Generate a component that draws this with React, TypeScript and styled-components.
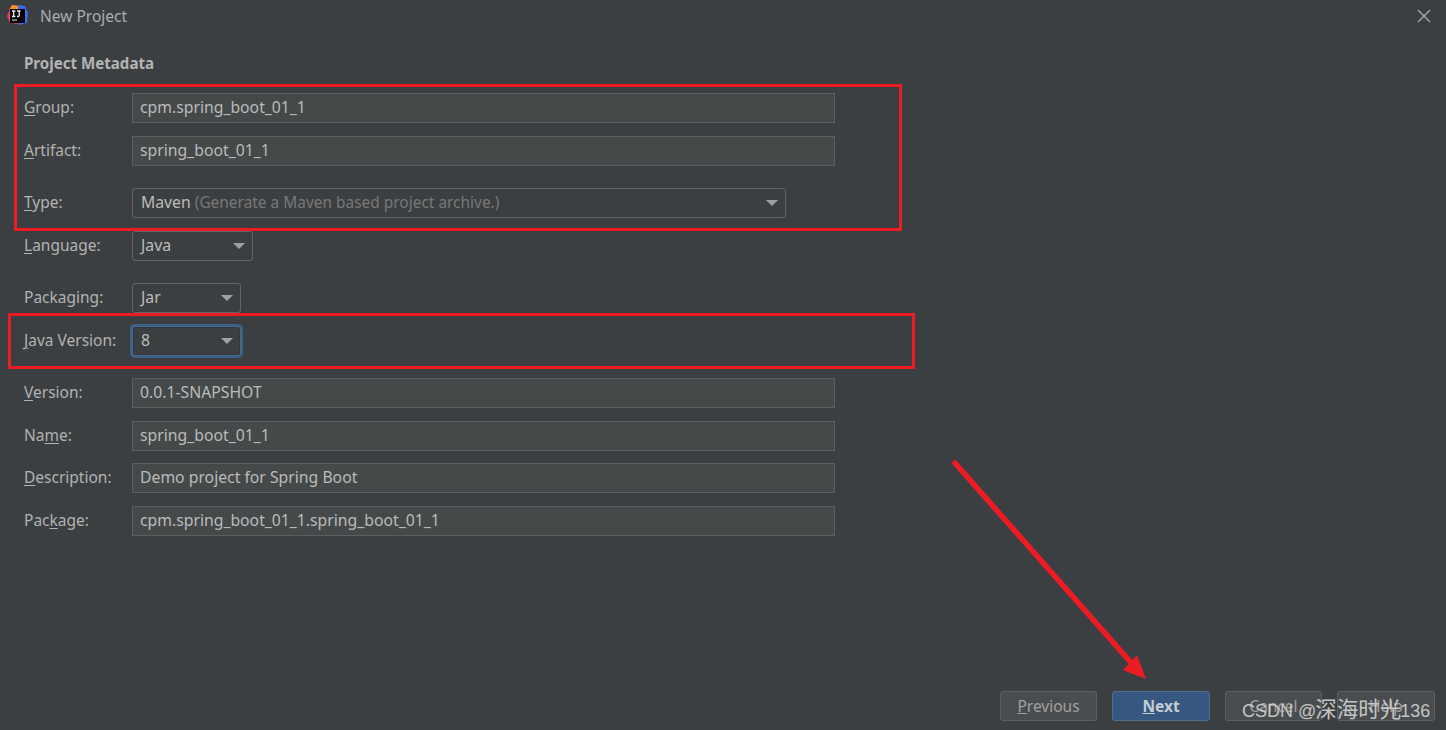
import React from "react";
import styled, { createGlobalStyle } from "styled-components";

const Global = createGlobalStyle`
  html, body { margin: 0; padding: 0; background: #3c3f41; }
  body { font-family: "Noto Sans", "Open Sans", "Liberation Sans", sans-serif; }
`;

const Dialog = styled.div`
  position: relative;
  width: 1446px;
  height: 730px;
  overflow: hidden;
  display: flex;
  flex-direction: column;
  background: #3c3f41;
  color: #bbbbbb;
  font-size: 15.75px;
`;

const TitleBar = styled.div`
  height: 33px;
  flex: none;
  display: flex;
  align-items: center;
  padding: 0 15px 2px 7px;
  gap: 12px;
  box-sizing: border-box;
  color: #a6adb0;
`;

const TitleText = styled.span`
  flex: 1;
  font-size: 15.5px;
`;

const Form = styled.div`
  flex: 1;
  padding: 19px 0 0 24px;
  display: flex;
  flex-direction: column;
`;

const Heading = styled.div`
  font-weight: 700;
  font-size: 15.1px;
  line-height: 22px;
  color: #b4b4b4;
  margin-bottom: 19px;
`;

const Row = styled.div<{ $top: number }>`
  display: flex;
  align-items: center;
  height: 30px;
  margin-top: ${(p) => p.$top}px;
`;

const Label = styled.label`
  width: 108px;
  flex: none;
  color: #b2b2b2;
  font-size: 15.5px;
  padding-bottom: 2px;
  u { text-underline-offset: 2px; }
`;

const Field = styled.div`
  box-sizing: border-box;
  width: 703px;
  height: 30px;
  padding: 0 0 2px 7px;
  display: flex;
  align-items: center;
  background: #45494a;
  border: 1px solid #5c5f60;
  color: #bbbbbb;
  white-space: pre;
`;

const Select = styled.div<{ $w: number; $focus?: boolean }>`
  box-sizing: border-box;
  width: ${(p) => p.$w}px;
  height: 30px;
  padding: 0 7px 0 8px;
  display: flex;
  align-items: center;
  justify-content: space-between;
  background: #3c3f41;
  border: 1px solid ${(p) => (p.$focus ? "#44698f" : "#646464")};
  border-radius: 3px;
  color: #bbbbbb;
  box-shadow: ${(p) => (p.$focus ? "0 0 0 2px #3d6185, inset 0 0 0 1px #33383c" : "none")};
`;

const Hint = styled.span`
  color: #787878;
  margin-left: 4px;
  font-size: 15.45px;
`;

const SelectText = styled.span`
  white-space: pre;
  padding-bottom: 2px;
`;

const Caret = styled.span`
  width: 0;
  height: 0;
  border-left: 6px solid transparent;
  border-right: 6px solid transparent;
  border-top: 6px solid #a0a0a0;
`;

const Footer = styled.div`
  flex: none;
  display: flex;
  justify-content: flex-end;
  gap: 15px;
  padding: 0 11.25px 9px 0;
`;

const Button = styled.div<{ $primary?: boolean }>`
  box-sizing: border-box;
  width: 97.5px;
  height: 30px;
  display: flex;
  align-items: center;
  justify-content: center;
  border-radius: 3px;
  border: 1px solid ${(p) => (p.$primary ? "#4c708c" : "#5e6060")};
  background: ${(p) => (p.$primary ? "#365880" : "#4a4d4f")};
  color: ${(p) => (p.$primary ? "#c4ccd4" : "#a0a0a0")};
  font-weight: ${(p) => (p.$primary ? 700 : 400)};
  font-size: 15.5px;
`;

const Annotation = styled.div<{ $l: number; $t: number; $w: number; $h: number }>`
  position: absolute;
  box-sizing: border-box;
  left: ${(p) => p.$l}px;
  top: ${(p) => p.$t}px;
  width: ${(p) => p.$w}px;
  height: ${(p) => p.$h}px;
  border: 3px solid #ed1c24;
  pointer-events: none;
`;

const ArrowLayer = styled.svg`
  position: absolute;
  left: 940px;
  top: 450px;
`;

const Watermark = styled.div`
  position: absolute;
  left: 1242px;
  top: 695px;
  font-family: "Liberation Sans", "Noto Sans CJK SC", sans-serif;
  font-size: 18px;
  line-height: 30px;
  color: #d2d2d2;
  opacity: 0.9;
  white-space: nowrap;
`;

const WatermarkCjk = styled.span`
  font-size: 21.5px;
  margin: 0 -1px;
`;

const Logo = () => (
  <svg width="21" height="21" viewBox="0 0 21 21">
    <path d="M0 11 L5 0 L11 1 L12 19 L3 18 Z" fill="#ee3d6c" />
    <path d="M2 5 L5 0 L12 1 L11 5 Z" fill="#f7922b" />
    <path d="M11 0 L18 1 L21 8 L20 18 L12 20 Z" fill="#3b6cf0" />
    <rect x="3" y="4" width="15" height="14" fill="#000" />
    <rect x="5" y="14.5" width="5" height="1.2" fill="#ccc" />
    <path d="M5 6 H8.4 M6.7 6 V11.5 M5 11.5 H8.4 M10 6 H13.5 M12.2 6 V10.5 Q12.2 11.5 11 11.5 H10" stroke="#eee" strokeWidth="1.3" fill="none" />
  </svg>
);

const CloseIcon = () => (
  <svg width="14" height="14" viewBox="0 0 14 14">
    <path d="M1 1 L13 13 M13 1 L1 13" stroke="#a8a8a8" strokeWidth="1.4" />
  </svg>
);

export default function App() {
  return (
    <Dialog>
      <Global />
      <TitleBar>
        <Logo />
        <TitleText>New Project</TitleText>
        <CloseIcon />
      </TitleBar>
      <Form>
        <Heading>Project Metadata</Heading>
        <Row $top={0}>
          <Label><u>G</u>roup:</Label>
          <Field>cpm.spring_boot_01_1</Field>
        </Row>
        <Row $top={13}>
          <Label><u>A</u>rtifact:</Label>
          <Field>spring_boot_01_1</Field>
        </Row>
        <Row $top={22}>
          <Label><u>T</u>ype:</Label>
          <Select $w={654}>
            <SelectText>Maven<Hint>(Generate a Maven based project archive.)</Hint></SelectText>
            <Caret />
          </Select>
        </Row>
        <Row $top={13}>
          <Label><u>L</u>anguage:</Label>
          <Select $w={121}><SelectText>Java</SelectText><Caret /></Select>
        </Row>
        <Row $top={22}>
          <Label>Packa<u>g</u>ing:</Label>
          <Select $w={109}><SelectText>Jar</SelectText><Caret /></Select>
        </Row>
        <Row $top={13}>
          <Label><u>J</u>ava Version:</Label>
          <Select $w={109} $focus><SelectText>8</SelectText><Caret /></Select>
        </Row>
        <Row $top={22}>
          <Label><u>V</u>ersion:</Label>
          <Field>0.0.1-SNAPSHOT</Field>
        </Row>
        <Row $top={13}>
          <Label>Na<u>m</u>e:</Label>
          <Field>spring_boot_01_1</Field>
        </Row>
        <Row $top={12}>
          <Label><u>D</u>escription:</Label>
          <Field>Demo project for Spring Boot</Field>
        </Row>
        <Row $top={13}>
          <Label>Pac<u>k</u>age:</Label>
          <Field>cpm.spring_boot_01_1.spring_boot_01_1</Field>
        </Row>
      </Form>
      <Footer>
        <Button><span><u>P</u>revious</span></Button>
        <Button $primary><span><u>N</u>ext</span></Button>
        <Button>Cancel</Button>
        <Button>Help</Button>
      </Footer>
      <Annotation $l={14} $t={84} $w={888} $h={147} />
      <Annotation $l={8} $t={313} $w={907} $h={56} />
      <ArrowLayer width="220" height="240" viewBox="0 0 220 240">
        <path d="M15 13 L194 216" stroke="#ed1c24" strokeWidth="5.5" strokeLinecap="round" />
        <path d="M206 229 L183 220 L197 205 Z" fill="#ed1c24" />
      </ArrowLayer>
      <Watermark>CSDN @<WatermarkCjk>深海时光</WatermarkCjk>136</Watermark>
    </Dialog>
  );
}
